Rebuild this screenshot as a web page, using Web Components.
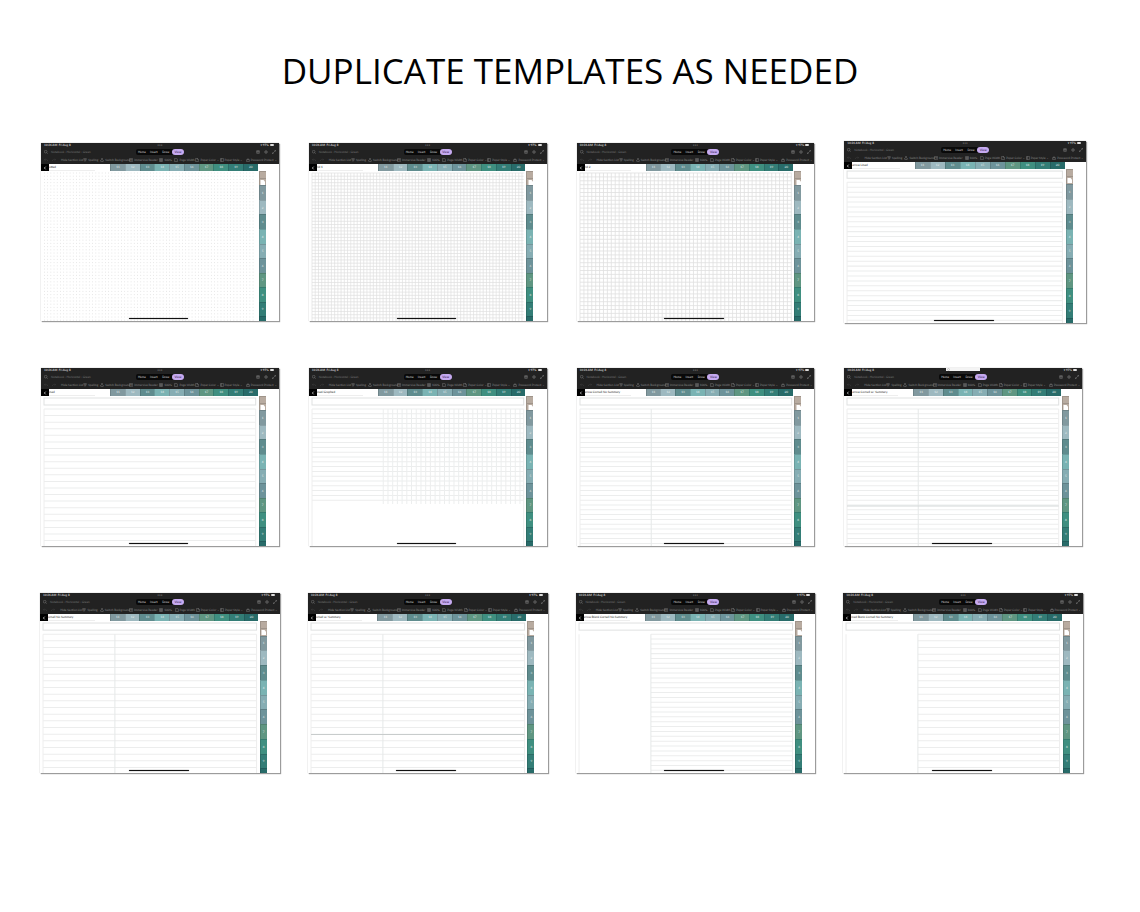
<!DOCTYPE html>
<html lang="en">
<head>
<meta charset="utf-8">
<title>Duplicate templates as needed</title>
<style>
  body { margin: 0; background: #fff; color: #000; font-family: "Open Sans", "Noto Sans", sans-serif; }
</style>
</head>
<body>
<template-gallery>
  <span slot="title">DUPLICATE TEMPLATES AS NEEDED</span>
  <template-row>
    <template-card paper="dots">otted</template-card>
    <template-card paper="fine-grid">rid 1</template-card>
    <template-card paper="grid">rid 2</template-card>
    <template-card paper="narrow" large>arrow Lined</template-card>
  </template-row>
  <template-row>
    <template-card paper="lined">ined</template-card>
    <template-card paper="graph">ined/Graphed</template-card>
    <template-card paper="narrow-cornell">arrow Cornell No Summary</template-card>
    <template-card paper="narrow-cornell-summary" popup>arrow Cornell w/ Summary</template-card>
  </template-row>
  <template-row wide>
    <template-card paper="cornell">ornell No Summary</template-card>
    <template-card paper="cornell-summary">ornell w/ Summary</template-card>
    <template-card paper="narrow-blank">arrow Blank Cornell No Summary</template-card>
    <template-card paper="blank">ined Blank Cornell No Summary</template-card>
  </template-row>
</template-gallery>

<script>
const TAB_COLORS = ['#81999f', '#9eb9c0', '#5f8c8e', '#7ab3b3', '#86adb3', '#6d939a', '#5f9682', '#3f8f80', '#337d76', '#286b69'];

function build(host, html) {
  host.attachShadow({ mode: 'open' }).innerHTML = html;
}

customElements.define('template-gallery', class extends HTMLElement {
  constructor() {
    super();
    build(this, `<style>
      :host { display: block; padding: 46px 0 60px; }
      h1 { margin: 0 0 47px; font-size: 35px; line-height: 50px; font-weight: 400; text-align: center; }
      main { display: flex; flex-direction: column; gap: 47px; }
    </style>
    <h1><slot name="title"></slot></h1>
    <main><slot></slot></main>`);
  }
});

customElements.define('template-row', class extends HTMLElement {
  constructor() {
    super();
    build(this, `<style>
      :host { display: grid; grid-template-columns: repeat(4, minmax(0, 1fr)); gap: 30px; padding: 0 58px 0 41px; --card-height: 178px; }
      :host([wide]) { gap: 28px; padding: 0 57px 0 40px; --card-height: 180px; }
    </style><slot></slot>`);
  }
});

/* Dark application header: status line, mode tabs and tool buttons. */
customElements.define('app-header', class extends HTMLElement {
  constructor() {
    super();
    const svg = d => `<svg viewBox="0 0 12 12" aria-hidden="true"><path d="${d}"/></svg>`;
    const icons = {
      undo: 'M4 2L1 5l3 3M1 5h7q3 0 3 4',
      redo: 'M8 2l3 3-3 3M11 5H4Q1 5 1 9',
      spell: 'M1 2h10M2 5h8M4 7l2 3 4-5',
      fill: 'M5 1v3L1 9l2 2h6l2-2-4-5V1z',
      reader: 'M1 2h10v5M1 2v8h5M4 5h5M8 8v3l3-2z',
      zoom: 'M2 1h8v10H2zM2 4h8M2 7h8M6 4v7',
      page: 'M2 1h6l2 2v8H2z',
      color: 'M2 1h5l3 3v7H2zM7 1v3h3',
      style: 'M3 1h7v10H3zM3 1v10M1 3h2M1 9h2',
      lock: 'M2 5h8v6H2zM4 5V3q2-3 4 0v2'
    };
    const tools = [['undo', ''], ['redo', ''], ['', 'Hide Section List'], ['spell', 'Spelling'], ['fill', 'Switch Background'],
      ['reader', 'Immersive Reader'], ['zoom', '100%'], ['page', 'Page Width'], ['color', 'Paper Color ⌄'],
      ['style', 'Paper Style ⌄'], ['lock', 'Password Protect ⌄']];
    build(this, `<style>
      :host { display: block; height: 21px; background: #222; color: #aaa;
        font: 3px/5px Lato, "Open Sans", sans-serif; text-rendering: geometricPrecision; white-space: nowrap; }
      button { all: unset; display: flex; align-items: center; gap: 1px; min-width: 0; white-space: nowrap; }
      svg { width: 4px; height: 4px; flex: none; fill: none; stroke: #888; stroke-width: 1.4; }
      .status, .bar { display: grid; grid-template-columns: 1fr auto 1fr; align-items: center; padding: 0 3px; }
      .status { height: 4px; line-height: 4px; color: #ccc; font-weight: 700; }
      .dots { color: #777; font-weight: 400; }
      .end { justify-self: end; display: flex; gap: 4px; align-items: center; }
      .status .end { gap: 1px; padding-right: 2px; }
      .battery { width: 4px; height: 2px; background: #ddd; border-radius: 1px; }
      .bar { height: 10px; }
      .path { display: flex; gap: 3px; align-items: center; color: #777; }
      .modes { display: grid; grid-template-columns: repeat(4, 12px); height: 6px; background: #090909; border-radius: 2px; color: #ddd; }
      .modes button { justify-content: center; }
      .modes .on { background: #c6aaf0; color: #432c65; border-radius: 3px; font-weight: 700; }
      .tools { display: grid; height: 6px; align-items: center; padding: 0 0 0 3px; color: #888;
        grid-template-columns: minmax(0,8fr) minmax(0,9fr) minmax(0,22fr) minmax(0,17fr) minmax(0,29fr) minmax(0,30fr) minmax(0,15fr) minmax(0,21fr) minmax(0,24fr) minmax(0,26fr) minmax(0,33fr); }
      .dim svg { stroke: #444; }
    </style>
    <div class="status"><span>10:26 AM&nbsp; Fri Aug 8</span><span class="dots">•••</span>
      <span class="end"><span>▾ 97%</span><span class="battery"></span></span></div>
    <div class="bar">
      <span class="path">${svg('M1 5a4 4 0 1 0 8 0a4 4 0 1 0-8 0M8 8l3 3')}<span>Notebook › Horizontal › Green</span></span>
      <div class="modes"><button>Home</button><button>Insert</button><button>Draw</button><button class="on">View</button></div>
      <span class="end">${svg('M2 2h8v8H2zM2 5h8M6 2v8')}${svg('M2 6a4 4 0 1 0 8 0a4 4 0 1 0-8 0M6 4v4M4 6h4')}${svg('M1 11L11 1M7 1h4v4M1 7v4h4')}</span>
    </div>
    <div class="tools">${tools.map(([i, t]) =>
      `<button class="${t ? '' : 'dim'}"${t ? '' : ` aria-label="${i}"`}>${i ? svg(icons[i]) : ''}${t ? `<span>${t}</span>` : ''}</button>`).join('')}</div>`);
  }
});

/* Ruled, squared or dotted sheet, drawn in a 217 x 150 space. */
customElements.define('note-paper', class extends HTMLElement {
  connectedCallback() {
    if (this.shadowRoot) return;
    const kind = this.getAttribute('kind');
    const [L, R, B] = [3, 214, 150];
    const line = (x1, y1, x2, y2, c = '#eceded', w = 1) =>
      `<path d="M${x1} ${y1}L${x2} ${y2}" stroke="${c}" stroke-width="${w}"/>`;
    let art = '';
    const rows = (x, top, bottom, step, c, w) => { for (let y = top; y <= bottom; y += step) art += line(x, y, R, y, c, w); };
    const cols = (x, top, bottom, step, c, w) => { for (; x <= R; x += step) art += line(x, top, x, bottom, c, w); };
    if (kind === 'dots') {
      for (let y = 2; y < B; y += 3.2)
        art += `<path d="M${L} ${y}H${R}" stroke="#dadada" stroke-width=".8" stroke-dasharray=".8 2.4"/>`;
    } else if (kind === 'fine-grid') {
      rows(L, 2, B, 3.22, '#e0e0e0', .7); cols(L, 2, B, 3.22, '#e0e0e0', .7);
    } else if (kind === 'grid') {
      rows(L, 2, B, 3.9, '#e0e0e0', .8); cols(L, 2, B, 3.9, '#e0e0e0', .8);
    } else {
      art += `<rect x="${L}" y="2" width="211" height="7" fill="none" stroke="#dfe1e1"/>`;
      const bottom = kind === 'graph' ? 108 : B;
      const left = kind.includes('blank') ? 74 : L;
      rows(left, 13, bottom, /narrow|graph/.test(kind) ? 4.8 : 6.58);
      if (kind === 'graph') cols(74, 13, 108, 4.7, '#eceeee');
      art += line(L, 13, L, B, '#eeeeee') + line(R, 13, R, B, '#eeeeee');
      if (/cornell|blank/.test(kind)) art += line(74, 13, 74, B, '#e6e8e8');
      if (kind === 'narrow-cornell-summary') art += line(L, 110, R, 110, '#d4d7d7');
      if (kind === 'cornell-summary') art += line(L, 112, R, 112, '#c8cccc');
    }
    build(this, `<style>
      :host { display: block; min-height: 0; }
      svg { display: block; width: 100%; height: 100%; }
    </style><svg viewBox="0 0 217 150" preserveAspectRatio="none" aria-hidden="true">${art}</svg>`);
  }
});

customElements.define('template-card', class extends HTMLElement {
  connectedCallback() {
    if (this.shadowRoot) return;
    const link = (n, c) => `<a href="#tab-${n}" style="background:${c}">${n}</a>`;
    build(this, `<style>
      :host { position: relative; display: grid; grid-template-rows: 21px 7px minmax(0, 1fr); height: var(--card-height);
        background: #fff; box-shadow: 0 0 1px #aaa, 1px 1px 1px #999;
        font: 3px/6px Lato, "Open Sans", sans-serif; text-rendering: geometricPrecision; }
      :host([large]) { height: 182px; margin: -2px -4px -2px 0; }
      .top { display: grid; grid-template-columns: 8px minmax(0, 61fr) minmax(0, 147fr) minmax(0, 21fr); white-space: nowrap; }
      .back { all: unset; display: grid; place-items: center; background: #000; }
      .back svg { width: 4px; height: 4px; fill: none; stroke: #fff; stroke-width: 1; }
      .name { color: #222; border-bottom: 1px solid #eee; margin-right: 15px; height: 6px; }
      a { color: #e5eeee; text-decoration: none; box-sizing: border-box; }
      .tabs { display: grid; grid-template-columns: repeat(10, minmax(0, 1fr)); text-align: center; }
      .tabs a { border-left: 1px solid #0002; }
      .body { display: grid; grid-template-columns: minmax(0, 217fr) 7px minmax(0, 13fr); min-height: 0; }
      .side { display: flex; flex-direction: column; min-height: 0; }
      .side a { flex: 44 1 0; min-height: 0; display: grid; place-items: center; border-top: 1px solid #0002; border-left: 1px solid #0002; }
      .side .cover { flex-grow: 20; background: #b8aba0; }
      .side .cover svg { width: 5px; height: 5px; fill: #fff; }
      .side a:last-child { flex-grow: 12; }
      .home { position: absolute; left: 37%; width: 25%; bottom: 2px; height: 1px; background: #111; border-radius: 1px; box-shadow: 0 0 1px #222; }
      .popup { position: absolute; left: 43%; width: 14%; top: 0; height: 3px; background: #f4f4f4; }
      .popup svg { display: block; width: 3px; height: 3px; margin-left: 1px; fill: none; stroke: #aaa; }
    </style>
    <app-header></app-header>
    <div class="top">
      <button class="back" aria-label="Back"><svg viewBox="0 0 6 6"><path d="M4 1L2 3l2 2"/></svg></button>
      <span class="name"><slot></slot></span>
      <nav class="tabs" aria-label="Sections">${TAB_COLORS.map((c, i) => link(i + 11, c)).join('')}</nav>
    </div>
    <div class="body">
      <note-paper kind="${this.getAttribute('paper')}"></note-paper>
      <nav class="side" aria-label="Pages">
        <a class="cover" href="#cover" aria-label="Cover"></a>
        <a class="cover" href="#page" aria-label="Page"><svg viewBox="0 0 10 10"><path d="M1 0h6l3 3v7H1z"/></svg></a>
        ${TAB_COLORS.map((c, i) => i < 9 ? link(i + 1, c) : `<a href="#more" aria-label="More" style="background:${c}"></a>`).join('')}
      </nav>
    </div>
    <div class="home"></div>
    ${this.hasAttribute('popup') ? '<div class="popup"><svg viewBox="0 0 6 6"><circle cx="3" cy="3" r="2"/></svg></div>' : ''}`);
  }
});
</script>
</body>
</html>
